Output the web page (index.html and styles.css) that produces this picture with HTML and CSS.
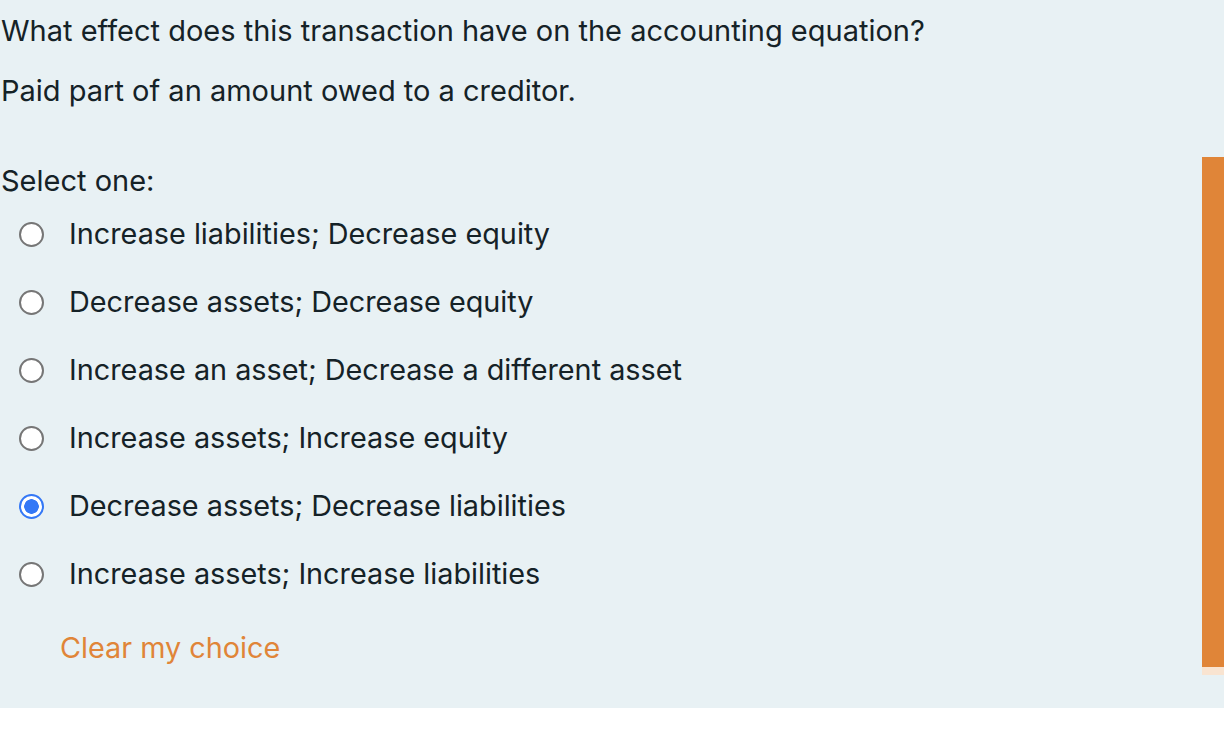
FILE: index.html
```html
<!DOCTYPE html>
<html lang="en">
<head>
<meta charset="utf-8">
<title>Question</title>
<link rel="stylesheet" href="styles.css">
</head>
<body>
<div class="que">
  <div class="content">
    <p class="qtext">What effect does this transaction have on the accounting equation?</p>
    <p class="qtext">Paid part of an amount owed to a creditor.</p>
    <div class="ablock">
      <p class="prompt">Select one:</p>
      <div class="answer">
        <label class="option"><span class="radio"></span><span>Increase liabilities; Decrease equity</span></label>
        <label class="option"><span class="radio"></span><span>Decrease assets; Decrease equity</span></label>
        <label class="option"><span class="radio"></span><span>Increase an asset; Decrease a different asset</span></label>
        <label class="option"><span class="radio"></span><span>Increase assets; Increase equity</span></label>
        <label class="option"><span class="radio checked"></span><span>Decrease assets; Decrease liabilities</span></label>
        <label class="option"><span class="radio"></span><span>Increase assets; Increase liabilities</span></label>
      </div>
      <a class="clear" href="#">Clear my choice</a>
    </div>
  </div>
  <div class="side">
    <div class="bar"></div>
  </div>
</div>
</body>
</html>
```
FILE: styles.css
```css
html, body {
  margin: 0;
  padding: 0;
  background: #ffffff;
}
body {
  font-family: Inter, "Noto Sans", "Liberation Sans", sans-serif;
  font-size: 29px;
  color: #152227;
}
.que {
  display: flex;
  height: 708px;
  background: #e8f1f4;
}
.content {
  flex: 1;
  padding-top: 10px;
}
.qtext {
  margin: 0 0 18px 1px;
  line-height: 42px;
}
.ablock {
  margin-top: 48px;
}
.prompt {
  margin: 0 0 0 1px;
  line-height: 42px;
}
.answer {
  display: flex;
  flex-direction: column;
  padding-left: 19px;
  gap: 26px;
  margin-top: 11px;
  font-size: 28.8px;
}
.option {
  display: flex;
  align-items: center;
  gap: 25px;
  line-height: 42px;
}
.radio {
  width: 21px;
  height: 21px;
  border-radius: 50%;
  border: 2px solid #767676;
  background: #ffffff;
  flex: none;
  box-sizing: content-box;
}
.radio.checked {
  border-color: #3478f6;
  background: radial-gradient(circle, #3478f6 0 7px, #ffffff 7.5px);
}
.clear {
  display: inline-block;
  margin-left: 60px;
  margin-top: 32px;
  line-height: 42px;
  font-size: 28.8px;
  color: #e08538;
  text-decoration: none;
}
.side {
  width: 22px;
  padding-top: 157px;
}
.bar {
  height: 510px;
  background: #e08538;
  border-bottom: 8px solid #f9e4d1;
}
```
